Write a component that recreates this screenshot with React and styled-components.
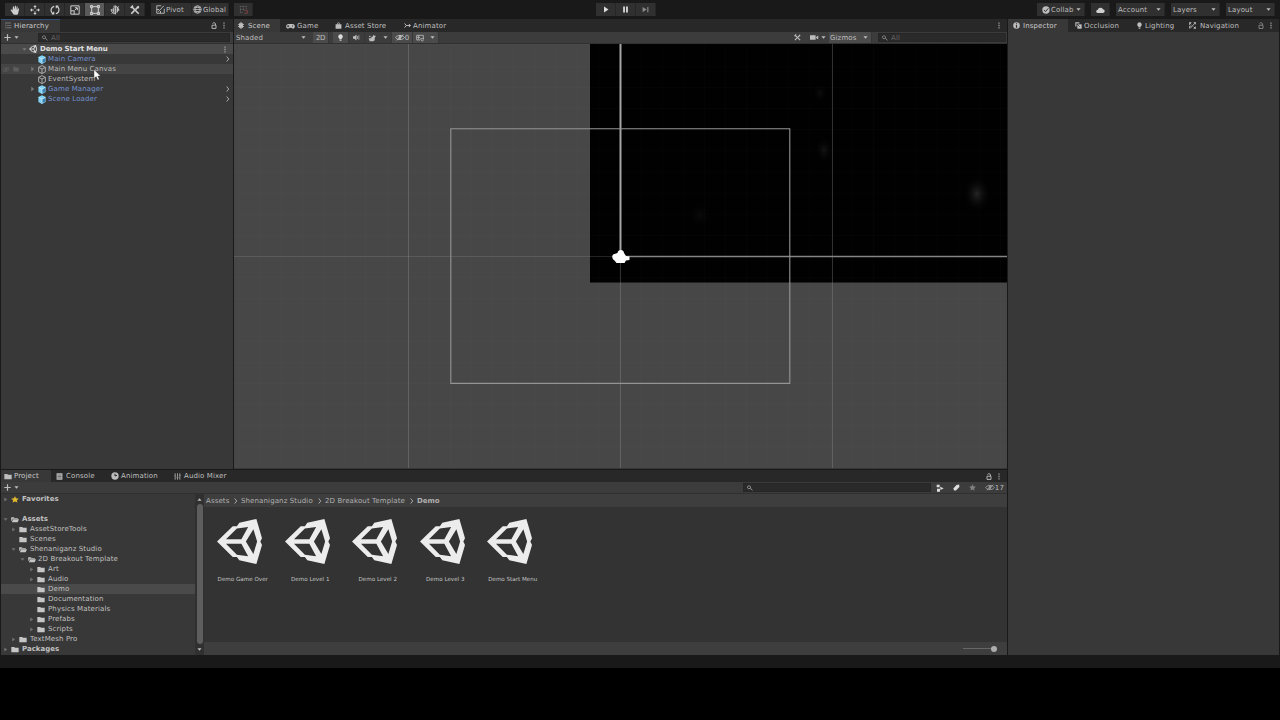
import React from "react";
import styled, { createGlobalStyle, css } from "styled-components";

const GlobalStyle = createGlobalStyle`
  * { box-sizing: border-box; }
  body {
    margin: 0;
    background: #000;
    overflow: hidden;
  }
`;

/* icon shapes, all on a 12x12 grid */
const paths = {
  hand: <path fill="currentColor" d="M3 6.5 1.4 5.2.6 6l3 4.6c.5.7 1 1 2 1h2c1.3 0 2-.6 2.2-1.8L11 4.4l-1-.5-1 2.4.2-4.4L8 1.7l-.5 4L7 .9H5.8l.1 4.8L4.6 1.600l-1.1.4z" />,
  move: <path fill="currentColor" d="M6 0l2 2.400H6.600V4.400H5.400V2.400H4zM6 12 4 9.600h1.400v-2h1.200v2H8zM0 6l2.400-2v1.400h2v1.200h-2V8zM12 6 9.600 8V6.600h-2V5.400h2V4z" />,
  rotate: <path fill="none" stroke="currentColor" strokeWidth="1.3" d="M5 1.400C-.2 3.400.4 9 4.200 10.500M2 10.700h2.500V8M7 10.600C12.200 8.600 11.600 3 7.800 1.500M10 1.300H7.500V4" />,
  scale: <path fill="none" stroke="currentColor" strokeWidth="1.2" d="M1 1h10v10H1zM1 7h4v4M5.500 6.500 8.500 3.500M5.800 3.300h3v3" />,
  rect: <path fill="none" stroke="currentColor" strokeWidth="1.2" d="M2 2h8v8H2zM.6.6h2.600v2.600H.6zM8.800.6h2.600v2.600H8.800zM.6 8.800h2.600v2.600H.6zM8.800 8.800h2.600v2.600H8.800z" />,
  transform: <path fill="none" stroke="currentColor" strokeWidth="1" d="M4 3.500h5v5H4zM6.500.8v10.400M1 6h10M2 10.500 4 8.500M9 3.500l1.500-2M4 1.500A5 5 0 0 1 10.500 7M1.500 5A5 5 0 0 0 7 10.500" />,
  tools: <path fill="none" stroke="currentColor" strokeWidth="1.9" d="m1.500 1.500 9 9M10.500 1.500 6.800 5.200M5.200 6.800l-3.700 3.700M.8 3.600 3.600.8M8.500 1.800l2 2" />,
  pivot: <path fill="none" stroke="currentColor" strokeWidth="1.2" d="M11 5v6H1V1h6M3 9l7.500-8M1 6h3M6 11V8" />,
  global: <path fill="none" stroke="currentColor" strokeWidth="1.1" d="M6 1a5 5 0 1 0 0 10A5 5 0 0 0 6 1zM1 6h10M6 1C2.500 4 2.500 8 6 11 9.500 8 9.500 4 6 1M2 3.300h8M2 8.700h8" />,
  snap: <g fill="none" stroke="#5c5c5c" strokeWidth="1.3"><path d="M1 2h10M1 6h6M1 10h4M2 1v10M6 1v6M10 1v4" strokeDasharray="1.5 1" /><path stroke="#7c4242" d="M7 7h4v4H7" /></g>,
  play: <path fill="currentColor" d="M2 1v10l9-5z" />,
  pause: <path fill="currentColor" d="M2 1h3v10H2zM7 1h3v10H7z" />,
  step: <path fill="currentColor" d="M1 1.500v9L8 6zM9 1.500h2v9H9z" />,
  check: <><circle cx="6" cy="6" r="5.5" fill="currentColor" /><path d="m3 6 2.200 2.400L9.500 3.500" fill="none" stroke="#333" strokeWidth="1.5" /></>,
  cloud: <path fill="currentColor" d="M3 10.500a2.500 2.500 0 0 1-.5-5 3.500 3.500 0 0 1 6.700-.8A3 3 0 0 1 9.500 10.500z" />,
  lock: <path fill="none" stroke="currentColor" strokeWidth="1.7" d="M2 5.500h8V11H2zM9 5.500V3.500C9 .8 4 .6 3 2.500" />,
  dots: <path fill="currentColor" d="M5 .8h2v2.200H5zM5 4.900h2v2.200H5zM5 9h2v2.200H5z" />,
  list: <path fill="currentColor" d="M0 1h10v1.600H0zM3 5h8v1.600H3zM3 9h8v1.600H3zM1 4h1v7H1z" />,
  plus: <path fill="currentColor" d="M5 .5h2V5h4.500v2H7v4.500H5V7H.5V5H5z" />,
  down: <path fill="currentColor" d="M1 3h10L6 9z" />,
  up: <path fill="currentColor" d="M1 9h10L6 3z" />,
  right: <path fill="currentColor" d="M3 1v10l7-5z" />,
  chevron: <path fill="none" stroke="currentColor" strokeWidth="1.8" d="m4 1 5 5-5 5" />,
  search: <path fill="none" stroke="currentColor" strokeWidth="2" d="M4 1.500a3 3 0 1 0 .1 0M6.500 6.500l4.500 4" />,
  cube: <path fill="none" stroke="currentColor" strokeWidth="1.2" d="m6 .8 5 2.300v6L6 11.400 1 9.100v-6zM1 3.100l5 2.300 5-2.300M6 5.400v6" />,
  prefab: <><path fill="#7fd0f5" d="m6 .2 5.400 2.400v6.800L6 11.900.6 9.400V2.600z" /><path fill="#3a80b4" d="m6 5.600 4.500-2v5.300L6 11.100z" /><path stroke="#d7f3ff" strokeWidth="1" fill="none" d="m1 3 5 2.500L11 3M6 5.500v6" /></>,
  scene: <path fill="currentColor" d="M2 2h8v8H2zM4 0h1v12H4zM7 0h1v12H7zM0 4h12v1H0zM0 7h12v1H0z" />,
  store: <path fill="currentColor" d="M1 4h2.500c0-4 5-4 5 0H11v7.500H1zM4.500 4h3c0-2.500-3-2.500-3 0" fillRule="evenodd" />,
  animator: <path fill="none" stroke="currentColor" strokeWidth="1.7" d="M1 2.500 4 6h7M1 9.500 4 6M8.500 3.500 11 6 8.500 8.500" />,
  bulb: <path fill="currentColor" d="M6 .5a4 4 0 0 0-2 7.400V9h4V7.900A4 4 0 0 0 6 .5M4.500 9.800h3v1.900h-3z" />,
  audio: <path fill="currentColor" d="M0 4h2.500L6 1v10L2.500 8H0zM7 3.500h1.200v5H7zM9.500 2h1.200v8H9.500z" />,
  effects: <path fill="currentColor" d="M1 6.500h4V4h2l1-3 1.500 1.500H12L10 6v3.500L8 11H2.500zM2 2.500l2 .5-.5 2-2-.5z" />,
  grid: <path fill="none" stroke="currentColor" strokeWidth="1.2" d="M1 2h10v5M1 2v7h5M1 5h5M4 2v7M7 7h5v1L9.500 11 7 8z" />,
  camera: <path fill="currentColor" d="M0 2h7.500v8H0zM8.200 5 11 2.500v7L8.200 7z" />,
  info: <><circle cx="6" cy="6" r="5.600" fill="currentColor" /><path fill="#333" d="M5 2h2v2H5zM5 5h2v5H5z" /></>,
  occlusion: <><path fill="currentColor" d="M.5.5h7v2h-5v5h-2z" /><path fill="currentColor" d="M4 4h7.500v7.500H4z" /><path stroke="#282828" strokeWidth="1.2" d="m3 3 5 5" /></>,
  nav: <path fill="none" stroke="currentColor" strokeWidth="1.5" d="m1 1 3 3M11 1 2 11M8 8l3 3M1 5V1h3M8 1h3v3M11 8v3H8M4 7H1v4" />,
  folder: <path fill="currentColor" d="M.5 1.500h4.300L6 3.200h5.500v7.600H.5z" />,
  open: <path fill="currentColor" d="M.3 2h4l1 1.400h5v1.200H2.800L1.400 8H.3zM3.300 5.500H12l-2 5H1.200z" />,
  star: <path fill="currentColor" d="m6 .3 1.700 3.700 4.100.5-3 2.800.8 4L6 9.300l-3.600 2 .8-4-3-2.800L4.300 4z" />,
  console: <path fill="currentColor" fillRule="evenodd" d="M1 .5h10v11H1zM2.500 3v1h7V3zM2.500 5.500v1h7v-1zM2.500 8v1h7V8z" />,
  clock: <><circle cx="6" cy="6" r="5.5" fill="currentColor" /><path d="M6 2.500V6l3-1" fill="none" stroke="#282828" strokeWidth="1.5" /></>,
  mixer: <path stroke="currentColor" strokeWidth="1.3" d="M2 .5v4M2 6v5.500M6 .5v6M6 8v3.500M10 .5v3M10 5v6.500M.5 5h3M4.500 7.500h3M8.500 4h3" />,
  types: <path fill="currentColor" d="M1 1h4.500v4H1zM1.500 7H6v4.500H1.500zM6 4l5.500 2.500L7 9z" />,
  tag: <path fill="currentColor" d="M.5 7.500 6 1.500l4.500-.5L11 5l-6 6H2z" />,
  unity: <path fill="currentColor" fillRule="evenodd" d="M0 6 4.200 1.900H5.300L5.950 1 10.500 0 12 5.100 11.550 6 12 6.900 10.500 12 5.950 11 5.300 10.100H4.200zM2.400 5.400H6.500L8.300 2.100 5.300 2.500zM2.400 6.600 5.300 9.500 8.300 9.900 6.500 6.600zM7.700 6 9.700 9.300 10.700 6 9.700 2.700z" />,
};

const Svg = styled.svg`
  flex: none;
  display: block;
  width: ${(p) => p.$w || 8}px;
  height: ${(p) => p.$h || p.$w || 8}px;
  margin-right: ${(p) => p.$gap || 0}px;
  color: ${(p) => p.$color || "#bdbdbd"};
`;

const Icon = ({ name, size, h, gap, color }) => (
  <Svg viewBox="0 0 12 12" preserveAspectRatio="none" $w={size} $h={h} $gap={gap} $color={color}>
    {paths[name]}
  </Svg>
);

const GameIcon = () => (
  <Svg viewBox="0 0 18 12" $w={9} $h={6} $gap={2}>
    <path fillRule="evenodd" fill="currentColor" d="M5 2h8c6 0 6 9 1 9-2 0-2-1.500-5-1.500S6 11 4 11C-1 11-1 2 5 2M3.500 4v1.500H2V7h1.500v1.500H5V7h1.500V5.500H5V4zM12 5h2v2h-2z" />
  </Svg>
);

const HiddenEye = ({ w = 10, color }) => (
  <Svg viewBox="0 0 18 12" $w={w} $h={7} $color={color}>
    <path fill="none" stroke="currentColor" strokeWidth="1.8" d="M1 6c4-5 12-5 16 0-4 5-12 5-16 0M3 11 15 1" />
    <circle cx="9" cy="6" r="2.5" fill="currentColor" />
  </Svg>
);

const Text = styled.span`
  flex: none;
  white-space: nowrap;
  letter-spacing: ${(p) => (p.$ls === undefined ? 0.12 : p.$ls)}px;
  width: ${(p) => (p.$w ? `${p.$w}px` : "auto")};
`;

const Space = styled.div`
  flex: ${(p) => (p.$w ? `0 0 ${p.$w}px` : "1")};
`;

const Editor = styled.div`
  width: 1280px;
  height: 720px;
  display: grid;
  grid-template-rows: 19px 636px 13px 52px;
  background: #000;
  color: #bfbfbf;
  font: 7px/10px "DejaVu Sans", sans-serif;
  cursor: default;
`;

const TopBar = styled.header`
  display: flex;
  align-items: center;
  background: #191919;
  padding: 2px 5px;
`;

const ToolButton = styled.div`
  width: ${(p) => p.$w || 20}px;
  height: 13px;
  display: flex;
  align-items: center;
  justify-content: ${(p) => (p.$pl ? "flex-start" : "center")};
  padding-left: ${(p) => p.$pl || 0}px;
  background: ${(p) => (p.$active ? "#5a5a5a" : "#303030")};
  border-right: 1px solid #262626;
  margin-right: ${(p) => p.$mr || 0}px;
`;

const Main = styled.main`
  display: grid;
  grid-template-columns: 1007px 271px;
  column-gap: 1px;
  padding: 0 1px 0 0;
  background: #191919;
`;

const Workspace = styled.div`
  display: grid;
  grid-template-rows: 450px 186px;
`;

const Upper = styled.div`
  display: grid;
  grid-template-columns: 232px 773px;
  column-gap: 1px;
  padding-left: 1px;
`;

const Panel = styled.section`
  display: flex;
  flex-direction: column;
  min-width: 0;
  min-height: 0;
  overflow: hidden;
  background: #383838;
`;

const TabBar = styled.div`
  flex: none;
  height: ${(p) => p.$h || 13}px;
  display: flex;
  align-items: stretch;
  background: #282828;
  padding-right: ${(p) => p.$pr || 5}px;
`;

const Tab = styled.div`
  width: ${(p) => p.$w}px;
  display: flex;
  align-items: center;
  padding-left: ${(p) => p.$pl || 4}px;
  ${(p) =>
    p.$active &&
    css`
      background: #383838;
      color: #cacaca;
    `}
  ${(p) =>
    p.$focus &&
    css`
      box-shadow: inset 0 1px #35507a;
    `}
`;

const TabTools = styled.div`
  margin-left: auto;
  display: flex;
  align-items: center;
  gap: 4px;
`;

const Toolbar = styled.div`
  flex: none;
  height: 12px;
  display: flex;
  align-items: center;
  background: #3c3c3c;
  border-bottom: 1px solid #303030;
`;

const Field = styled.div`
  width: ${(p) => p.$w}px;
  height: 9px;
  display: flex;
  align-items: center;
  padding-left: 3px;
  background: #2a2a2a;
  border: 1px solid #262626;
  color: #626262;
`;

const Toggle = styled.div`
  width: ${(p) => p.$w}px;
  height: 11px;
  display: flex;
  align-items: center;
  justify-content: center;
  gap: ${(p) => p.$gap || 0}px;
  background: ${(p) => (p.$on ? "#4b4b4b" : "#3c3c3c")};
  border-right: 1px solid #363636;
`;

const Row = styled.div`
  height: 10px;
  display: flex;
  align-items: center;
  padding-left: ${(p) => p.$indent}px;
  padding-right: 3px;
  background: ${(p) => p.$bg || "transparent"};
  color: ${(p) => p.$color || "#c0c0c0"};
  font-weight: ${(p) => (p.$bold ? "bold" : "normal")};
`;

const Arrow = styled.div`
  width: ${(p) => p.$w || 9}px;
  padding-left: ${(p) => p.$pl || 0}px;
  display: flex;
  flex: none;
`;

const Tree = styled.div`
  position: relative;
`;

const Gutter = styled.div`
  width: 28px;
  display: flex;
  gap: 3px;
  flex: none;
`;

const Pointer = styled.svg`
  position: absolute;
  left: 92px;
  top: 25px;
  width: 8px;
  height: 12px;
`;

const SceneView = styled.svg`
  display: block;
  width: 773px;
  height: 424px;
  background: #474747;
`;

const ProjectPanel = styled(Panel)`
  margin: 1px 0 0 1px;
`;

const Browser = styled.div`
  flex: 1;
  min-height: 0;
  display: grid;
  grid-template-columns: 194px 9px 1fr;
`;

const ScrollBar = styled.div`
  display: flex;
  flex-direction: column;
  align-items: center;
  padding: 3px 0 3px;
  background: #303030;
`;

const Thumb = styled.div`
  flex: 1;
  width: 6px;
  margin: 2px 0 3px;
  border-radius: 3px;
  background: #5e5e5e;
`;

const Contents = styled.div`
  display: grid;
  grid-template-rows: 13px 1fr 13px;
  background: #333;
`;

const Breadcrumb = styled.div`
  display: flex;
  align-items: center;
  background: #3e3e3e;
  padding-left: 2px;
  color: #b0b0b0;
`;

const Assets = styled.div`
  display: flex;
  padding: 12px 0 0 5px;
`;

const Asset = styled.div`
  width: 67.5px;
  display: flex;
  flex-direction: column;
  align-items: center;
  font-size: 5.6px;
  gap: 10px;
  color: #c4c4c4;
`;

const Footer = styled.div`
  display: flex;
  align-items: center;
  justify-content: flex-end;
  background: #3e3e3e;
  padding-right: 10px;
`;

const Slider = styled.div`
  width: 34px;
  height: 1px;
  display: flex;
  align-items: center;
  justify-content: flex-end;
  background: #666;
`;

const Knob = styled.div`
  width: 6px;
  height: 6px;
  border-radius: 50%;
  background: #adadad;
`;

const StatusBar = styled.footer`
  background: #191919;
`;

const tools = ["hand", "move", "rotate", "scale", "rect", "transform", "tools"];

const hierarchy = [
  { label: "Main Camera", icon: "prefab", prefab: true },
  { label: "Main Menu Canvas", icon: "cube", arrow: true, hover: true },
  { label: "EventSystem", icon: "cube" },
  { label: "Game Manager", icon: "prefab", prefab: true, arrow: true },
  { label: "Scene Loader", icon: "prefab", prefab: true },
];

const folders = [
  { label: "Favorites", indent: 1, icon: "star", arrow: "right", bold: true },
  null,
  { label: "Assets", indent: 1, icon: "open", arrow: "down", bold: true },
  { label: "AssetStoreTools", indent: 9, icon: "folder", arrow: "right" },
  { label: "Scenes", indent: 9, icon: "folder" },
  { label: "Shenaniganz Studio", indent: 9, icon: "open", arrow: "down" },
  { label: "2D Breakout Template", indent: 18, icon: "open", arrow: "down" },
  { label: "Art", indent: 27, icon: "folder", arrow: "right" },
  { label: "Audio", indent: 27, icon: "folder", arrow: "right" },
  { label: "Demo", indent: 27, icon: "folder", selected: true },
  { label: "Documentation", indent: 27, icon: "folder" },
  { label: "Physics Materials", indent: 27, icon: "folder" },
  { label: "Prefabs", indent: 27, icon: "folder", arrow: "right" },
  { label: "Scripts", indent: 27, icon: "folder", arrow: "right" },
  { label: "TextMesh Pro", indent: 9, icon: "folder", arrow: "right" },
  { label: "Packages", indent: 1, icon: "folder", arrow: "right", bold: true },
];

const scenes = ["Demo Game Over", "Demo Level 1", "Demo Level 2", "Demo Level 3", "Demo Start Menu"];

const menus = ["Account", "Layers", "Layout"];

const gridLines = Array.from({ length: 37 }, (_, i) => 5 + i * 21.15);

const Header = () => (
  <TopBar>
    {tools.map((name) => (
      <ToolButton key={name} $active={name === "rect"} $mr={name === "tools" ? 6 : 0}>
        <Icon name={name} size={10} color="#cfcfcf" />
      </ToolButton>
    ))}
    <ToolButton $w={41} $pl={5}>
      <Icon name="pivot" size={9} gap={1} />
      <Text>Pivot</Text>
    </ToolButton>
    <ToolButton $w={37} $pl={1} $mr={5}>
      <Icon name="global" size={9} gap={1} />
      <Text>Global</Text>
    </ToolButton>
    <ToolButton $w={19}>
      <Icon name="snap" size={9} />
    </ToolButton>
    <Space />
    <ToolButton><Icon name="play" size={6} h={7} color="#ddd" /></ToolButton>
    <ToolButton><Icon name="pause" size={7} color="#ddd" /></ToolButton>
    <ToolButton $mr={381}><Icon name="step" size={7} color="#888" /></ToolButton>
    <ToolButton $w={48} $pl={5} $mr={6}>
      <Icon name="check" size={8} gap={1} />
      <Text $w={25}>Collab</Text>
      <Icon name="down" size={5} />
    </ToolButton>
    <ToolButton $w={19} $mr={6}><Icon name="cloud" size={9} h={8} color="#cfcfcf" /></ToolButton>
    {menus.map((label) => (
      <ToolButton key={label} $w={49} $pl={2} $mr={label === "Layout" ? 0 : 6}>
        <Text $w={38}>{label}</Text>
        <Icon name="down" size={5} />
      </ToolButton>
    ))}
  </TopBar>
);

const Hierarchy = () => (
  <Panel>
    <TabBar $pr={6}>
      <Tab $w={59} $active $focus>
        <Icon name="list" size={7} gap={2} color="#777" />
        <Text>Hierarchy</Text>
      </Tab>
      <TabTools>
        <Icon name="lock" size={6} h={7} />
        <Icon name="dots" size={6} h={7} />
      </TabTools>
    </TabBar>
    <Toolbar>
      <Space $w={3} />
      <Icon name="plus" size={7} gap={3} />
      <Icon name="down" size={5} gap={19} />
      <Field $w={192}>
        <Icon name="search" size={6} gap={3} color="#888" />
        <Text>All</Text>
      </Field>
    </Toolbar>
    <Tree>
      <Row $indent={21} $bg="#4a4a4a" $bold $color="#e0e0e0">
        <Icon name="down" size={5} gap={2} color="#777" />
        <Icon name="unity" size={8} gap={3} color="#ddd" />
        <Text $ls={-0.1}>Demo Start Menu</Text>
        <Space />
        <Icon name="dots" size={6} h={7} gap={2} />
      </Row>
      {hierarchy.map((item) => (
        <Row key={item.label} $indent={1} $color={item.prefab ? "#7390cf" : "#bcbcbc"} $bg={item.hover ? "#444" : undefined}>
          <Gutter>
            {item.hover && <HiddenEye w={8} color="#5c5c5c" />}
            {item.hover && <Icon name="folder" size={6} color="#5c5c5c" />}
          </Gutter>
          <Arrow $w={8}>{item.arrow && <Icon name="right" size={5} h={6} color="#777" />}</Arrow>
          <Icon name={item.icon} size={8} h={9} gap={2} />
          <Text>{item.label}</Text>
          <Space />
          {item.prefab && <Icon name="chevron" size={5} h={6} />}
        </Row>
      ))}
      <Pointer viewBox="0 0 8 12">
        <path d="M1 .5v9l2.200-2 1.500 3.500 1.600-.7L4.800 7H7.500z" fill="#fff" stroke="#333" strokeWidth=".4" />
      </Pointer>
    </Tree>
  </Panel>
);

const Scene = () => (
  <Panel>
    <TabBar>
      <Tab $w={46} $active>
        <Icon name="scene" size={6} h={7} gap={4} />
        <Text>Scene</Text>
      </Tab>
      <Tab $w={49} $pl={6}><GameIcon /><Text>Game</Text></Tab>
      <Tab $w={69} $pl={6}>
        <Icon name="store" size={7} gap={3} />
        <Text>Asset Store</Text>
      </Tab>
      <Tab $w={60} $pl={6}>
        <Icon name="animator" size={7} gap={2} />
        <Text>Animator</Text>
      </Tab>
      <TabTools><Icon name="dots" size={6} h={7} /></TabTools>
    </TabBar>
    <Toolbar>
      <Space $w={2} />
      <Text $w={65}>Shaded</Text>
      <Icon name="down" size={5} gap={7} />
      <Toggle $w={16} $on><Text $ls={-0.3}>2D</Text></Toggle>
      <Space $w={4} />
      <Toggle $w={16} $on><Icon name="bulb" size={7} color="#ddd" /></Toggle>
      <Toggle $w={16}><Icon name="audio" size={7} /></Toggle>
      <Toggle $w={27} $gap={7}>
        <Icon name="effects" size={8} />
        <Icon name="down" size={5} />
      </Toggle>
      <Toggle $w={21} $on>
        <HiddenEye />
        <Text>0</Text>
      </Toggle>
      <Toggle $w={26} $on $gap={6}>
        <Icon name="grid" size={8} />
        <Icon name="down" size={5} />
      </Toggle>
      <Space />
      <Icon name="tools" size={7} gap={9} />
      <Icon name="camera" size={9} h={7} gap={2} />
      <Icon name="down" size={5} gap={3} />
      <Toggle $w={43} $on $gap={3}>
        <Text $w={30}>Gizmos</Text>
        <Icon name="down" size={5} gap={2} />
      </Toggle>
      <Space $w={6} />
      <Field $w={128}>
        <Icon name="search" size={6} gap={3} color="#888" />
        <Text>All</Text>
      </Field>
      <Space $w={1} />
    </Toolbar>
    <SceneView viewBox="234 44 773 424">
      <defs>
        <radialGradient id="glow">
          <stop offset="0" stopColor="#242424" />
          <stop offset="1" stopColor="#000" stopOpacity="0" />
        </radialGradient>
      </defs>
      <rect x="590" y="44" width="417" height="238.5" fill="#010101" />
      <ellipse cx="977" cy="194" rx="14" ry="19" fill="url(#glow)" />
      <ellipse cx="824" cy="150" rx="9" ry="14" fill="url(#glow)" opacity=".5" />
      <ellipse cx="820" cy="93" rx="8" ry="10" fill="url(#glow)" opacity=".35" />
      <ellipse cx="700" cy="215" rx="12" ry="14" fill="url(#glow)" opacity=".25" />
      <g stroke="#fff" strokeOpacity=".02">
        {gridLines.map((x) => <path key={x} d={`M${234 + x} 44v424`} />)}
        {gridLines.slice(0, 20).map((y) => <path key={y} d={`M234 ${40 + y}h773`} />)}
      </g>
      <path d="M408.500 44v424M620.500 256v212M832.500 44v424" stroke="#999" strokeOpacity=".32" />
      <path d="M234 256.500h386" stroke="#999" strokeOpacity=".2" />
      <path d="M620.500 44v212" stroke="#a4a4a4" strokeWidth="2" />
      <path d="M620 256.500h387" stroke="#858585" strokeWidth="1.6" />
      <path d="M450.800 128.800h339v254.600h-339z" fill="none" stroke="#949494" strokeWidth="1.1" />
      <path d="M617.500 253c.2-4 6.500-4 6.500 0l2 3 3.500 .500v3.500l-3.500 .5-1.500 2.500h-8l-2-2.500c-3.500-2-2.500-6.500 0-6.500z" fill="#fff" />
    </SceneView>
  </Panel>
);

const Inspector = () => (
  <Panel>
    <TabBar>
      <Tab $w={60} $pl={5} $active>
        <Icon name="info" size={7} gap={3} />
        <Text>Inspector</Text>
      </Tab>
      <Tab $w={63} $pl={7}>
        <Icon name="occlusion" size={7} gap={2} />
        <Text>Occlusion</Text>
      </Tab>
      <Tab $w={53} $pl={5}>
        <Icon name="bulb" size={7} gap={2} />
        <Text>Lighting</Text>
      </Tab>
      <Tab $w={64} $pl={5}>
        <Icon name="nav" size={7} gap={4} />
        <Text>Navigation</Text>
      </Tab>
      <TabTools>
        <Icon name="lock" size={6} h={7} color="#888" />
        <Icon name="dots" size={6} h={7} />
      </TabTools>
    </TabBar>
  </Panel>
);

const Project = () => (
  <ProjectPanel>
    <TabBar $h={12}>
      <Tab $w={50} $pl={3} $active>
        <Icon name="folder" size={8} h={7} gap={2} />
        <Text>Project</Text>
      </Tab>
      <Tab $w={54} $pl={5}>
        <Icon name="console" size={7} gap={3} />
        <Text>Console</Text>
      </Tab>
      <Tab $w={64} $pl={6}>
        <Icon name="clock" size={8} gap={2} />
        <Text>Animation</Text>
      </Tab>
      <Tab $w={65} $pl={5}>
        <Icon name="mixer" size={7} gap={3} />
        <Text>Audio Mixer</Text>
      </Tab>
      <TabTools>
        <Icon name="lock" size={6} h={7} />
        <Icon name="dots" size={6} h={7} />
      </TabTools>
    </TabBar>
    <Toolbar>
      <Space $w={3} />
      <Icon name="plus" size={7} gap={3} />
      <Icon name="down" size={5} />
      <Space />
      <Field $w={188}><Icon name="search" size={6} color="#999" /></Field>
      <Space $w={5} />
      <Icon name="types" size={8} gap={9} color="#ddd" />
      <Icon name="tag" size={7} gap={9} color="#ddd" />
      <Icon name="star" size={7} gap={9} color="#808080" />
      <HiddenEye color="#999" />
      <Text>17</Text>
      <Space $w={3} />
    </Toolbar>
    <Browser>
      <Tree>
        {folders.map((item, i) =>
          item ? (
            <Row key={item.label} $indent={item.indent} $bold={item.bold} $bg={item.selected ? "#4a4a4a" : undefined}>
              <Arrow $pl={1}>
                {item.arrow && <Icon name={item.arrow} size={5} color="#707070" />}
              </Arrow>
              <Icon name={item.icon} size={8} h={7} gap={item.icon === "open" && item.indent > 9 ? 2 : 3} color={item.icon === "star" ? "#e0b92f" : "#c6c6c6"} />
              <Text $ls={item.bold ? 0 : undefined}>{item.label}</Text>
            </Row>
          ) : (
            <Row key={i} $indent={0} />
          )
        )}
      </Tree>
      <ScrollBar>
        <Icon name="up" size={5} />
        <Thumb />
        <Icon name="down" size={5} />
      </ScrollBar>
      <Contents>
        <Breadcrumb>
          <Text $w={27}>Assets</Text>
          <Icon name="chevron" size={5} h={6} gap={3} />
          <Text $w={76}>Shenaniganz Studio</Text>
          <Icon name="chevron" size={5} h={6} gap={3} />
          <Text $w={84}>2D Breakout Template</Text>
          <Icon name="chevron" size={5} h={6} gap={3} />
          <Text $ls={-0.05}><b>Demo</b></Text>
        </Breadcrumb>
        <Assets>
          {scenes.map((label) => (
            <Asset key={label}>
              <Icon name="unity" size={45} gap={6} color="#ececec" />
              <Text $ls={0}>{label}</Text>
            </Asset>
          ))}
        </Assets>
        <Footer>
          <Slider><Knob /></Slider>
        </Footer>
      </Contents>
    </Browser>
  </ProjectPanel>
);

const App = () => (
  <>
    <GlobalStyle />
    <Editor>
      <Header />
      <Main>
        <Workspace>
          <Upper>
            <Hierarchy />
            <Scene />
          </Upper>
          <Project />
        </Workspace>
        <Inspector />
      </Main>
      <StatusBar />
    </Editor>
  </>
);

export default App;
